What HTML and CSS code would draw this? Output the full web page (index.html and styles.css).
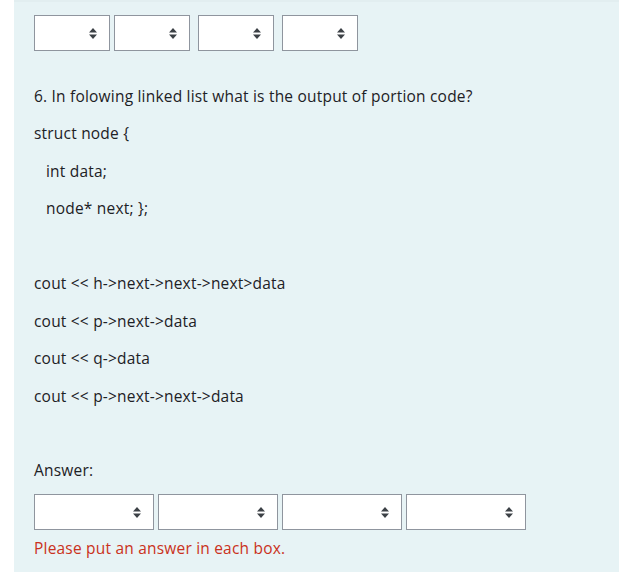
FILE: index.html
```html
<!DOCTYPE html>
<html>
<head>
<meta charset="utf-8">
<link rel="stylesheet" href="styles.css">
</head>
<body>
<div class="panel">
  <div class="select-row top-row">
    <div class="sel w76"><svg class="arr" width="8" height="11" viewBox="0 0 8 11"><path d="M0 4.5L4 0L8 4.5Z M0 6.5L4 11L8 6.5Z" fill="#3c4146"/></svg></div>
    <div class="sel w76"><svg class="arr" width="8" height="11" viewBox="0 0 8 11"><path d="M0 4.5L4 0L8 4.5Z M0 6.5L4 11L8 6.5Z" fill="#3c4146"/></svg></div>
    <div class="sel w76 wide-gap"><svg class="arr" width="8" height="11" viewBox="0 0 8 11"><path d="M0 4.5L4 0L8 4.5Z M0 6.5L4 11L8 6.5Z" fill="#3c4146"/></svg></div>
    <div class="sel w76 wide-gap"><svg class="arr" width="8" height="11" viewBox="0 0 8 11"><path d="M0 4.5L4 0L8 4.5Z M0 6.5L4 11L8 6.5Z" fill="#3c4146"/></svg></div>
  </div>
  <div class="qtext">
    <p>6. In folowing linked list what is the output of portion code?</p>
    <p>struct node {</p>
    <p class="ind">int data;</p>
    <p class="ind">node* next; };</p>
    <p class="empty">&nbsp;</p>
    <p>cout &lt;&lt; h-&gt;next-&gt;next-&gt;next&gt;data</p>
    <p>cout &lt;&lt; p-&gt;next-&gt;data</p>
    <p>cout &lt;&lt; q-&gt;data</p>
    <p>cout &lt;&lt; p-&gt;next-&gt;next-&gt;data</p>
  </div>
  <div class="answer-label">Answer:</div>
  <div class="select-row bottom-row">
    <div class="sel w120"><svg class="arr" width="8" height="11" viewBox="0 0 8 11"><path d="M0 4.5L4 0L8 4.5Z M0 6.5L4 11L8 6.5Z" fill="#3c4146"/></svg></div>
    <div class="sel w120"><svg class="arr" width="8" height="11" viewBox="0 0 8 11"><path d="M0 4.5L4 0L8 4.5Z M0 6.5L4 11L8 6.5Z" fill="#3c4146"/></svg></div>
    <div class="sel w120"><svg class="arr" width="8" height="11" viewBox="0 0 8 11"><path d="M0 4.5L4 0L8 4.5Z M0 6.5L4 11L8 6.5Z" fill="#3c4146"/></svg></div>
    <div class="sel w120"><svg class="arr" width="8" height="11" viewBox="0 0 8 11"><path d="M0 4.5L4 0L8 4.5Z M0 6.5L4 11L8 6.5Z" fill="#3c4146"/></svg></div>
  </div>
  <div class="error">Please put an answer in each box.</div>
</div>
</body>
</html>
```

FILE: styles.css
```css
html, body {
  margin: 0;
  padding: 0;
  background: #ffffff;
}
body {
  font-family: "Open Sans", "Liberation Sans", sans-serif;
  font-size: 15.5px;
  letter-spacing: 0.2px;
  color: #1d2125;
  width: 619px;
  height: 575px;
  overflow: hidden;
}
.panel {
  margin-left: 14px;
  background: #e7f3f5;
  border-top: 2px solid #e2eef0;
  padding: 13px 20px 12.75px 20px;
}
.select-row {
  display: flex;
  gap: 4px;
}
.sel {
  box-sizing: border-box;
  height: 36px;
  background: #ffffff;
  border: 1px solid #8f959e;
  display: flex;
  align-items: center;
  justify-content: flex-end;
  padding-right: 12px;
}
.w76 { width: 76px; }
.w120 { width: 120px; }
.wide-gap { margin-left: 4px; }
.arr { display: block; }
.qtext {
  margin-top: 33.75px;
}
.qtext p {
  margin: 0 0 15px 0;
  line-height: 22.5px;
}
.qtext p:last-child {
  margin-bottom: 0;
}
.qtext p.ind {
  padding-left: 12px;
}
.answer-label {
  margin-top: 51.5px;
  line-height: 22.5px;
}
.bottom-row {
  margin-top: 12.75px;
}
.error {
  margin-top: 6.75px;
  line-height: 22.5px;
  color: #ca3120;
}
```
